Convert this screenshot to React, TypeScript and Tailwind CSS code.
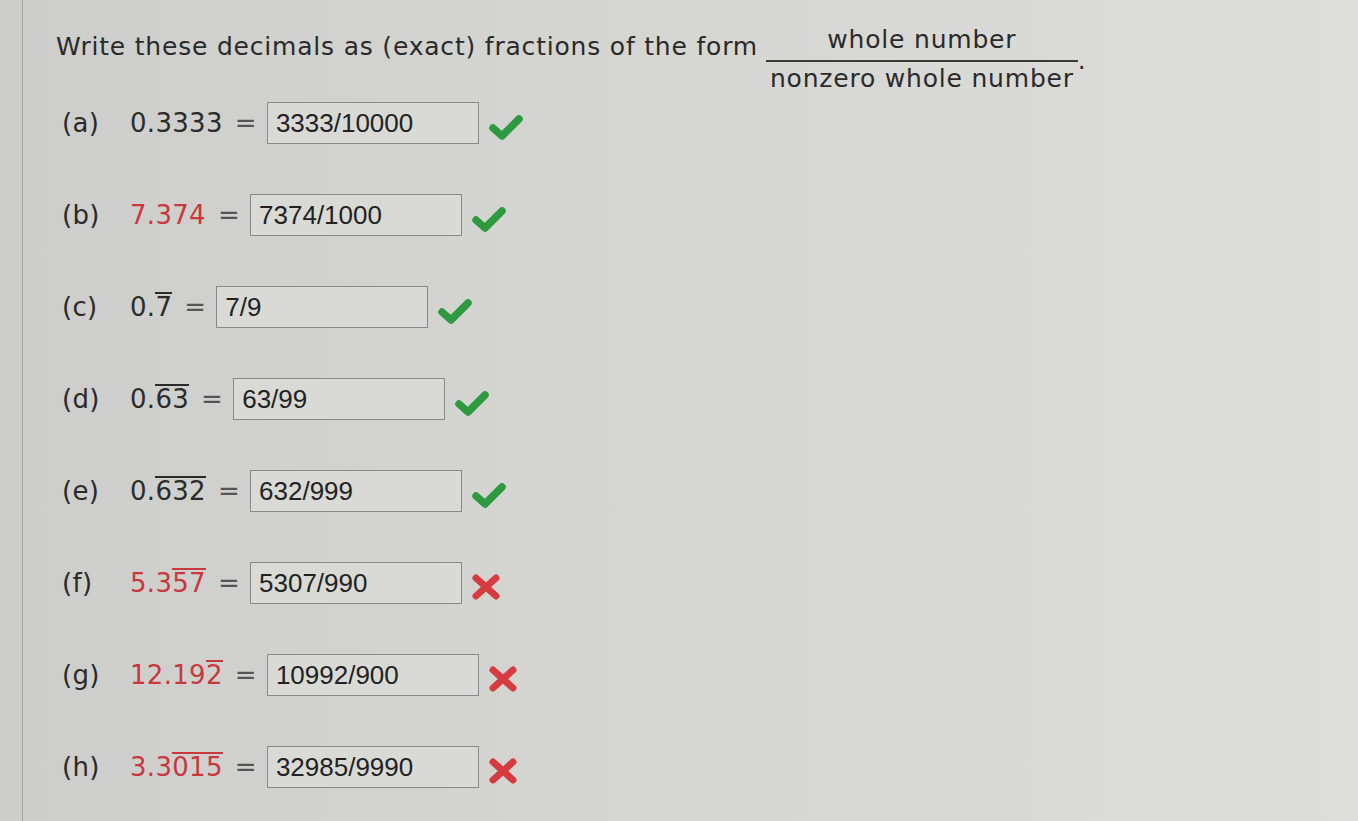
import React from "react";

type Row = {
  label: string;
  whole: string;
  plain: string;
  bar: string;
  answer: string;
  ok: boolean;
  red: boolean;
};

const rows: Row[] = [
  { label: "(a)", whole: "0.", plain: "3333", bar: "", answer: "3333/10000", ok: true, red: false },
  { label: "(b)", whole: "7.", plain: "374", bar: "", answer: "7374/1000", ok: true, red: true },
  { label: "(c)", whole: "0.", plain: "", bar: "7", answer: "7/9", ok: true, red: false },
  { label: "(d)", whole: "0.", plain: "", bar: "63", answer: "63/99", ok: true, red: false },
  { label: "(e)", whole: "0.", plain: "", bar: "632", answer: "632/999", ok: true, red: false },
  { label: "(f)", whole: "5.3", plain: "", bar: "57", answer: "5307/990", ok: false, red: true },
  { label: "(g)", whole: "12.19", plain: "", bar: "2", answer: "10992/900", ok: false, red: true },
  { label: "(h)", whole: "3.3", plain: "", bar: "015", answer: "32985/9990", ok: false, red: true },
];

const Check = () => (
  <svg width="38" height="32" viewBox="0 0 38 32" className="shrink-0">
    <path
      d="M6 17 L15 25 L32 8"
      fill="none"
      stroke="#2e9a3f"
      strokeWidth="7.5"
      strokeLinecap="round"
      strokeLinejoin="round"
    />
  </svg>
);

const Cross = () => (
  <svg width="32" height="30" viewBox="0 0 32 30" className="shrink-0">
    <path
      d="M6 6 L26 24 M26 6 L6 24"
      stroke="#d63b40"
      strokeWidth="7"
      strokeLinecap="round"
    />
  </svg>
);

const Problem: React.FC<{ row: Row }> = ({ row }) => (
  <div className="flex items-center h-[42px]">
    <span className="w-[68px] shrink-0">{row.label}</span>
    <span className={row.red ? "text-[#c9383d]" : "text-[#2b2b2b]"}>
      {row.whole}
      {row.plain}
      {row.bar && (
        <span className="inline-block border-t-2 border-current leading-[27px]">{row.bar}</span>
      )}
    </span>
    <span className="ml-[12px] mr-[10px] text-[#555]">=</span>
    <div className="w-[212px] h-[42px] shrink-0 border border-[#8a8a88] bg-[#d9dad6] flex items-center px-[8px] font-['Liberation_Sans',Arial,sans-serif] text-[26px] tracking-normal text-[#222]">
      {row.answer}
    </div>
    <div className="ml-[8px] mt-[8px]">{row.ok ? <Check /> : <Cross />}</div>
  </div>
);

export default function App() {
  return (
    <div className="w-[1358px] h-[821px] overflow-hidden bg-gradient-to-r from-[#cdcecb] via-[#d6d7d3] to-[#dddedb] font-['DejaVu_Sans',Verdana,sans-serif] text-[#2a2a2a]">
      <div className="ml-[22px] h-full border-l border-[#a5a6a2] pl-[33px] pt-[20px]">
        <div className="flex items-start text-[25px] tracking-[0.8px]">
          <span className="mt-[8px]">Write these decimals as (exact) fractions of the form</span>
          <div className="ml-[8px] flex flex-col items-center">
            <span className="px-[8px] leading-[40px]">whole number</span>
            <span className="self-stretch border-t-2 border-[#3a3a3a]" />
            <span className="px-[4px] leading-[34px]">nonzero whole number</span>
          </div>
          <span className="mt-[22px]">.</span>
        </div>
        <div className="mt-[6px] ml-[6px] flex flex-col gap-[50px] text-[26px] tracking-[0.3px]">
          {rows.map((r) => (
            <Problem key={r.label} row={r} />
          ))}
        </div>
      </div>
    </div>
  );
}
